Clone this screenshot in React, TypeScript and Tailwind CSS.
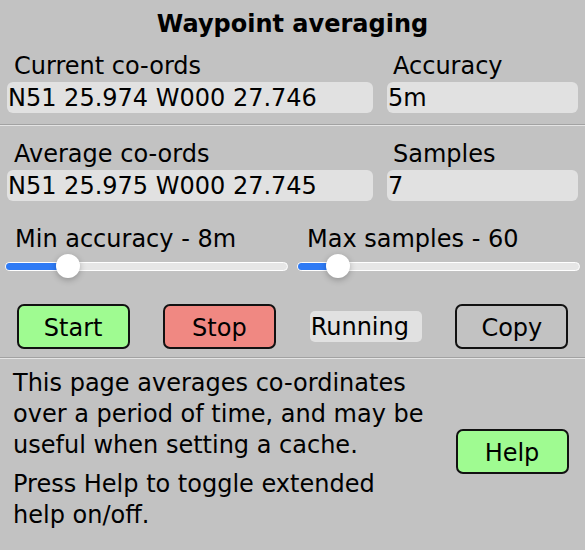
import React from 'react';

const font = { fontFamily: '"DejaVu Sans", Verdana, sans-serif' };

function Field({ value }: { value: string }) {
  return (
    <div className="h-[31px] rounded-[6px] bg-[#e1e1e1] pl-[1px] pt-[2px] leading-[28px] whitespace-nowrap overflow-hidden">
      {value}
    </div>
  );
}

function Separator() {
  return <div className="h-[2px] border-t border-b border-t-[#a2a2a2] border-b-[#e4e4e4]" />;
}

function Slider({ label, pct }: { label: string; pct: number }) {
  return (
    <div className="w-[283px]">
      <div className="pl-[10px] leading-[28px] whitespace-nowrap">{label}</div>
      <div className="relative mt-[1px] h-[24px] flex items-center">
        <div className="relative h-[9px] w-full rounded-full border border-white bg-[#e6e6e6] overflow-hidden">
          <div className="h-full bg-[#2f7bf5]" style={{ width: `${pct}%` }} />
        </div>
        <div
          className="absolute top-0 h-[24px] w-[24px] -ml-[12px] rounded-full bg-white shadow-[0_2px_6px_rgba(0,0,0,0.25)]"
          style={{ left: `${pct}%` }}
        />
      </div>
    </div>
  );
}

function Button({ label, color }: { label: string; color: string }) {
  return (
    <div className={`flex h-[45px] w-[113px] items-center justify-center rounded-[7px] border-2 border-[#111] pt-[2px] leading-[28px] ${color}`}>
      {label}
    </div>
  );
}

export default function App() {
  return (
    <div className="h-[550px] w-[585px] overflow-hidden bg-[#c2c2c2] text-[24px] text-black" style={font}>
      <div className="pt-[10px] text-center font-bold leading-[28px]">Waypoint averaging</div>

      {/* current */}
      <div className="mt-[14px] flex gap-[14px] pl-[7px]">
        <div className="w-[366px]">
          <div className="pl-[7px] leading-[28px]">Current co-ords</div>
          <div className="mt-[2px]"><Field value="N51 25.974 W000 27.746" /></div>
        </div>
        <div className="w-[191px]">
          <div className="pl-[6px] leading-[28px]">Accuracy</div>
          <div className="mt-[2px]"><Field value="5m" /></div>
        </div>
      </div>

      <div className="mt-[11px]"><Separator /></div>

      {/* average */}
      <div className="mt-[14px] flex gap-[14px] pl-[7px]">
        <div className="w-[366px]">
          <div className="pl-[7px] leading-[28px]">Average co-ords</div>
          <div className="mt-[2px]"><Field value="N51 25.975 W000 27.745" /></div>
        </div>
        <div className="w-[191px]">
          <div className="pl-[6px] leading-[28px]">Samples</div>
          <div className="mt-[2px]"><Field value="7" /></div>
        </div>
      </div>

      {/* sliders */}
      <div className="mt-[24px] flex gap-[9px] pl-[5px]">
        <Slider label="Min accuracy - 8m" pct={22.3} />
        <Slider label="Max samples - 60" pct={14.5} />
      </div>

      {/* buttons */}
      <div className="mt-[26px] grid grid-cols-4">
        <div className="flex justify-center"><Button label="Start" color="bg-[#9ffb91]" /></div>
        <div className="flex justify-center"><Button label="Stop" color="bg-[#f08882]" /></div>
        <div className="flex items-center justify-center">
          <div className="h-[31px] w-[112px] rounded-[5px] bg-[#e1e1e1] pl-[1px] pt-[1px] leading-[30px]">Running</div>
        </div>
        <div className="flex justify-center"><Button label="Copy" color="bg-transparent" /></div>
      </div>

      <div className="mt-[8px]"><Separator /></div>

      {/* help */}
      <div className="mt-[9px] flex items-center">
        <div className="w-[430px] pl-[13px] leading-[31px]">
          <p>This page averages co-ordinates over a period of time, and may be useful when setting a cache.</p>
          <p className="mt-[8px]">Press Help to toggle extended help on/off.</p>
        </div>
        <div className="ml-auto flex w-[146px] justify-center pt-[4px]">
          <Button label="Help" color="bg-[#9ffb91]" />
        </div>
      </div>
    </div>
  );
}
